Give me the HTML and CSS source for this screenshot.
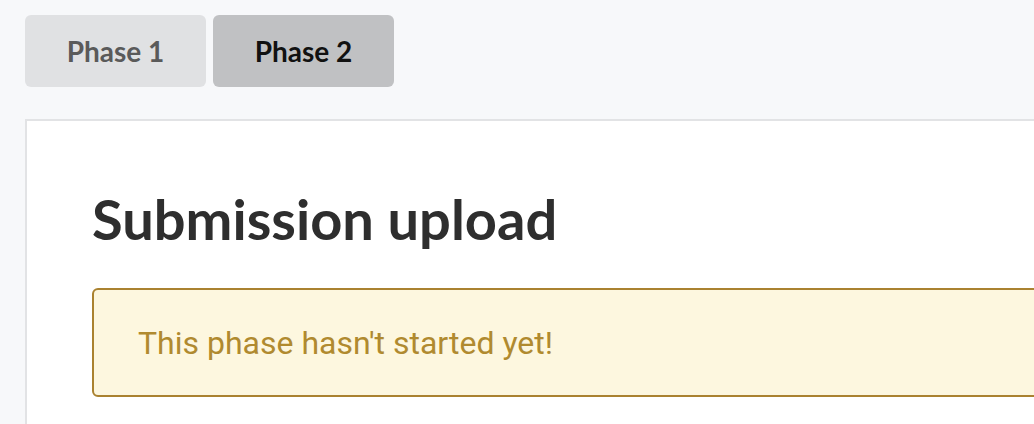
FILE: index.html
```html
<!DOCTYPE html>
<html>
<head>
<meta charset="utf-8">
<link rel="stylesheet" href="styles.css">
</head>
<body>
<div class="page">
  <div class="tabs">
    <div class="tab">Phase 1</div>
    <div class="tab active">Phase 2</div>
  </div>
  <div class="card">
    <h1 class="title">Submission upload</h1>
    <div class="alert">This phase hasn't started yet!</div>
  </div>
</div>
</body>
</html>
```
FILE: styles.css
```css
html, body {
  margin: 0;
  padding: 0;
  background: #f7f8fa;
  overflow: hidden;
}
.page {
  padding: 15px 0 0 25px;
  width: 1100px;
  height: 409px;
  overflow: hidden;
}
.tabs {
  display: flex;
  gap: 7px;
}
.tab {
  width: 181px;
  height: 72px;
  display: flex;
  align-items: center;
  justify-content: center;
  border-radius: 6px;
  background: #e0e1e3;
  color: #5a5a5a;
  font-family: Lato, sans-serif;
  font-weight: 700;
  font-size: 28px;
}
.tab.active {
  background: #c0c1c3;
  color: #111111;
}
.card {
  margin-top: 32px;
  background: #ffffff;
  border: 2px solid #e2e3e5;
  padding: 64px 0 40px 65px;
  height: 400px;
}
.title {
  margin: 0;
  font-family: Lato, sans-serif;
  font-weight: 700;
  font-size: 56px;
  line-height: 1.2;
  color: #2e2e2e;
}
.alert {
  margin-top: 36px;
  height: 105px;
  border: 2px solid #aa8230;
  border-radius: 6px;
  background: #fdf7df;
  display: flex;
  align-items: center;
  padding: 0 44px;
  font-family: Roboto, sans-serif;
  font-size: 32px;
  color: #b08a2f;
}
```
